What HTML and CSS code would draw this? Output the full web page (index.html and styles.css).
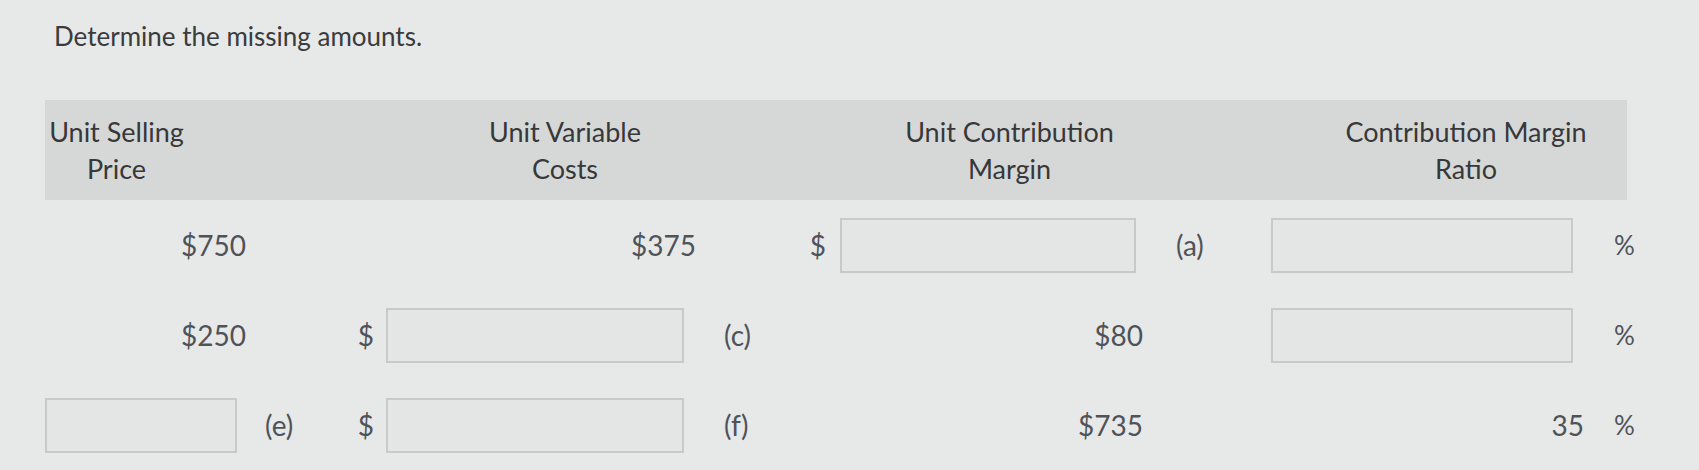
FILE: index.html
```html
<!DOCTYPE html>
<html lang="en">
<head>
<meta charset="utf-8">
<title>Determine the missing amounts</title>
<link rel="stylesheet" href="styles.css">
</head>
<body>
<div class="page">
  <p class="title">Determine the missing amounts.</p>
  <div class="grid">
    <div class="th th1">Unit Selling<br>Price</div>
    <div class="th th2">Unit Variable<br>Costs</div>
    <div class="th th3">Unit Contribution<br>Margin</div>
    <div class="th th4">Contribution Margin<br>Ratio</div>

    <div class="cell c1 r1 num">$750</div>
    <div class="cell c4 r1 num">$375</div>
    <div class="cell c6 r1 cur">$</div>
    <div class="cell c7 r1"><input class="box w296" type="text"></div>
    <div class="cell c8 r1 lbl">(a)</div>
    <div class="cell c9 r1"><input class="box w302" type="text"></div>
    <div class="cell c10 r1 pct">%</div>

    <div class="cell c1 r2 num">$250</div>
    <div class="cell c3 r2 cur">$</div>
    <div class="cell c4 r2"><input class="box w298" type="text"></div>
    <div class="cell c5 r2 lbl">(c)</div>
    <div class="cell c7 r2 num">$80</div>
    <div class="cell c9 r2"><input class="box w302" type="text"></div>
    <div class="cell c10 r2 pct">%</div>

    <div class="cell c1 r3"><input class="box w192" type="text"></div>
    <div class="cell c2 r3 lbl">(e)</div>
    <div class="cell c3 r3 cur">$</div>
    <div class="cell c4 r3"><input class="box w298" type="text"></div>
    <div class="cell c5 r3 lbl">(f)</div>
    <div class="cell c7 r3 num">$735</div>
    <div class="cell c9 r3 num">35</div>
    <div class="cell c10 r3 pct">%</div>
  </div>
</div>
</body>
</html>
```
FILE: styles.css
```css
html, body {
  margin: 0;
  padding: 0;
  background: #e7e8e8;
}
body {
  font-family: Lato, "Open Sans", "Liberation Sans", sans-serif;
  color: #3b3c3e;
  width: 1699px;
  height: 470px;
  overflow: hidden;
}
.page {
  padding-top: 21px;
}
.title {
  margin: 0 0 48px 54px;
  font-size: 26px;
  line-height: 31px;
  color: #3a3b3d;
}
.grid {
  margin-left: 45px;
  width: 1582px;
  display: grid;
  grid-template-columns: 201px 94px 46px 310px 94px 50px 303px 128px 313px 43px;
  grid-template-rows: 100px 90px 90px 90px;
}
.th {
  grid-row: 1;
  background: #d6d7d7;
  display: flex;
  align-items: center;
  justify-content: center;
  text-align: center;
  font-size: 27px;
  line-height: 37px;
  color: #37383a;
  white-space: nowrap;
}
.th1 { grid-column: 1 / 3; padding-right: 152px; }
.th2 { grid-column: 3 / 6; }
.th3 { grid-column: 6 / 9; padding-right: 42px; }
.th4 { grid-column: 9 / 11; padding-left: 34px; }

.cell {
  display: flex;
  align-items: center;
  font-size: 28px;
  color: #4f5359;
  white-space: nowrap;
}
.r1 { grid-row: 2; }
.r2 { grid-row: 3; }
.r3 { grid-row: 4; }
.c1 { grid-column: 1; }
.c2 { grid-column: 2; }
.c3 { grid-column: 3; }
.c4 { grid-column: 4; }
.c5 { grid-column: 5; }
.c6 { grid-column: 6; }
.c7 { grid-column: 7; }
.c8 { grid-column: 8; }
.c9 { grid-column: 9; }
.c10 { grid-column: 10; }

.num { justify-content: flex-end; }
.cur { justify-content: flex-end; }
.c3.cur { padding-right: 12px; }
.c6.cur { padding-right: 14px; }
.lbl { justify-content: flex-start; }
.c2.lbl { padding-left: 19px; }
.c5.lbl { padding-left: 28px; }
.c8.lbl { padding-left: 33px; }
.pct { padding-left: 30px; font-size: 26px; }

.box {
  box-sizing: border-box;
  height: 55px;
  margin: 0;
  padding: 0 8px;
  border: 2px solid #c8c9c9;
  background: #e4e5e5;
  font: inherit;
  outline: none;
}
.w192 { width: 192px; }
.w296 { width: 296px; }
.w298 { width: 298px; }
.w302 { width: 302px; }
```
